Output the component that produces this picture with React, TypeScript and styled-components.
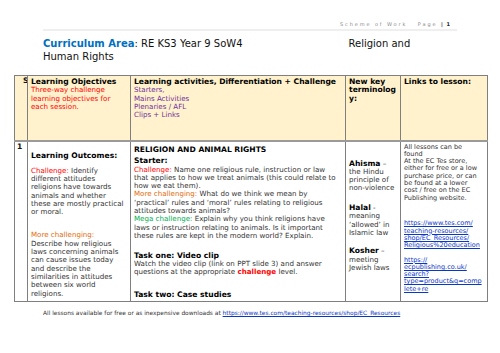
import styled, { createGlobalStyle } from 'styled-components'

const colors = {
    text: '#333333',
    heading: '#000000',
    title: '#0070c0',
    red: '#ff0000',
    purple: '#7030a0',
    orange: '#e36c09',
    green: '#00b050',
    link: '#0b37c9',
    headerFill: '#fff2cc',
    border: '#7f7f7f',
}

const GlobalStyle = createGlobalStyle`
    html, body {
        margin: 0;
        padding: 0;
        background: #ffffff;
    }
    body {
        font-family: 'DejaVu Sans', Verdana, sans-serif;
        color: ${colors.text};
    }
`

const Page = styled.div`
    width: 500px;
    height: 353px;
    overflow: hidden;
    box-sizing: border-box;
    padding: 21px 13px 0 14px;
`

const RunningHead = styled.div`
    margin-left: 29px;
    width: 414px;
    box-sizing: border-box;
    padding: 0 6px 1px 0;
    border-bottom: 2px solid #efefef;
    text-align: right;
    font-size: 5px;
    line-height: 7px;
    letter-spacing: 1.9px;
    color: #8a8a8a;
    white-space: pre;
`

const PageNo = styled.b`
    color: #222;
    letter-spacing: 1px;
`

const Title = styled.h1`
    margin: 6px 0 0 29px;
    font-size: 10px;
    line-height: 13px;
    font-weight: normal;
    color: #111;
`

const TitleLabel = styled.b`
    color: ${colors.title};
`

const TabStop = styled.span`
    display: inline-block;
    width: 106px;
`

const Grid = styled.table`
    margin-top: 12px;
    width: 473px;
    table-layout: fixed;
    border-collapse: collapse;
`

const Col = styled.col<{ $w: number }>`
    width: ${(p) => p.$w}px;
`

const HeadRow = styled.tr`
    height: 65px;
    background: ${colors.headerFill};
    border-bottom: 2px solid #9a9a9a;
`

const BodyRow = styled.tr`
    height: 161px;
`

const Cell = styled.td<{ $small?: boolean; $padRight?: number }>`
    border: 1px solid ${colors.border};
    vertical-align: top;
    overflow: hidden;
    padding: 2px ${(p) => p.$padRight ?? 3}px 0 3px;
    font-size: ${(p) => (p.$small ? '6.5px' : '7.1px')};
    line-height: ${(p) => (p.$small ? '7.3px' : '8.3px')};
`

const NumCell = styled(Cell)`
    padding: 1px 0 0 2px;
    font-weight: bold;
    font-size: 7.6px;
    color: #111;
    white-space: nowrap;
`

const Clipped = styled.span`
    display: inline-block;
    margin-left: 6px;
`

const Para = styled.p<{ $gap?: number }>`
    margin: ${(p) => p.$gap ?? 0}px 0 0 0;
`

const Heading = styled.b`
    color: ${colors.heading};
    font-size: 7.6px;
`

const NoWrap = styled.span`
    white-space: nowrap;
`

const Tone = styled.span<{ $c: string; $bold?: boolean }>`
    color: ${(p) => p.$c};
    font-weight: ${(p) => (p.$bold ? 'bold' : 'normal')};
`

const Link = styled.a`
    color: ${colors.link};
    text-decoration: underline;
`

const Footer = styled.p`
    margin: 7px 0 0 29px;
    font-size: 5.9px;
    line-height: 8px;
    color: #333;
`

export default function App() {
    return (
        <Page>
            <GlobalStyle />
            <RunningHead>
                {'Scheme of Work   Page '}
                <PageNo>| 1</PageNo>
            </RunningHead>
            <Title>
                <TitleLabel>Curriculum Area</TitleLabel>: RE KS3 Year 9 SoW4
                <TabStop />
                Religion and
                <br />
                Human Rights
            </Title>

            <Grid>
                <colgroup>
                    <Col $w={13} />
                    <Col $w={103} />
                    <Col $w={215} />
                    <Col $w={55} />
                    <Col $w={87} />
                </colgroup>
                <tbody>
                    <HeadRow>
                        <NumCell>
                            <Clipped>S</Clipped>
                        </NumCell>
                        <Cell $padRight={4}>
                            <Heading>Learning Objectives</Heading>
                            <Para>
                                <Tone $c={colors.red}>
                                    Three-way challenge learning objectives for each session.
                                </Tone>
                            </Para>
                        </Cell>
                        <Cell $padRight={6}>
                            <Heading>Learning activities, Differentiation + Challenge</Heading>
                            <Para>
                                <Tone $c={colors.purple}>
                                    Starters,
                                    <br />
                                    Mains Activities
                                    <br />
                                    Plenaries / AFL
                                    <br />
                                    Clips + Links
                                </Tone>
                            </Para>
                        </Cell>
                        <Cell>
                            <Heading>
                                New key
                                <br />
                                terminolog
                                <br />
                                y:
                            </Heading>
                        </Cell>
                        <Cell>
                            <Heading>Links to lesson:</Heading>
                        </Cell>
                    </HeadRow>

                    <BodyRow>
                        <NumCell>1</NumCell>
                        <Cell $padRight={4}>
                            <Para $gap={8}>
                                <Heading>Learning Outcomes:</Heading>
                            </Para>
                            <Para $gap={7}>
                                <Tone $c={colors.red}>Challenge:</Tone> Identify different attitudes
                                religions have towards animals and whether these are mostly practical
                                or moral.
                            </Para>
                            <Para $gap={14}>
                                <Tone $c={colors.orange}>More challenging:</Tone>
                            </Para>
                            <Para $gap={1}>
                                Describe how religious laws concerning animals can cause issues today
                                and describe the similarities in attitudes between six world
                                religions.
                            </Para>
                        </Cell>
                        <Cell $padRight={6}>
                            <Para $gap={2}>
                                <Heading>RELIGION AND ANIMAL RIGHTS</Heading>
                            </Para>
                            <Para $gap={3.5}>
                                <Heading>Starter:</Heading>
                            </Para>
                            <Para>
                                <Tone $c={colors.red}>Challenge:</Tone> Name one religious rule,
                                instruction or law that applies to how we treat animals (this could
                                relate to how we eat them).
                                <br />
                                <Tone $c={colors.orange}>More challenging:</Tone> What do we think we
                                mean by ‘practical’ rules and ‘moral’ rules relating to religious
                                attitudes towards animals?
                                <br />
                                <Tone $c={colors.green}>Mega challenge:</Tone> Explain why you think
                                religions have laws or instruction relating to animals. Is it
                                important these rules are kept in the modern world? Explain.
                            </Para>
                            <Para $gap={11.5}>
                                <Heading>Task one: Video clip</Heading>
                                <br />
                                Watch the video clip (link on PPT slide 3) and answer questions at
                                the appropriate{' '}
                                <Tone $c={colors.red} $bold>
                                    challenge
                                </Tone>{' '}
                                level.
                            </Para>
                            <Para $gap={14.5}>
                                <Heading>Task two: Case studies</Heading>
                            </Para>
                        </Cell>
                        <Cell>
                            <Para $gap={16}>
                                <Heading>Ahisma</Heading> – the Hindu principle of{' '}
                                <NoWrap>non-violence</NoWrap>
                            </Para>
                            <Para $gap={11.5}>
                                <Heading>Halal</Heading> - meaning ‘allowed’ in Islamic law
                            </Para>
                            <Para $gap={10}>
                                <Heading>Kosher</Heading> – meeting Jewish laws
                            </Para>
                        </Cell>
                        <Cell $small $padRight={8}>
                            <Para>
                                All lessons can be found
                                <br />
                                At the EC Tes store, either for free or a low purchase price, or can
                                be found at a lower cost / free on the EC Publishing website.
                            </Para>
                            <Para $gap={18.5}>
                                <Link href="#">
                                    https://www.tes.com/
                                    <br />
                                    teaching-resources/
                                    <br />
                                    shop/EC_Resources/
                                    <br />
                                    Religious%20education
                                </Link>
                            </Para>
                            <Para $gap={7}>
                                <Link href="#">
                                    https://
                                    <br />
                                    ecpublishing.co.uk/
                                    <br />
                                    search?
                                    <br />
                                    type=product&amp;q=comp
                                    <br />
                                    lete+re
                                </Link>
                            </Para>
                        </Cell>
                    </BodyRow>
                </tbody>
            </Grid>

            <Footer>
                All lessons available for free or as inexpensive downloads at{' '}
                <Link href="#">https://www.tes.com/teaching-resources/shop/EC_Resources</Link>
            </Footer>
        </Page>
    )
}
